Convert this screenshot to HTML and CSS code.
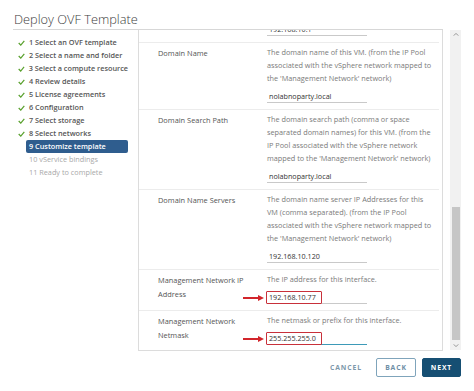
FILE: index.html
```html
<!DOCTYPE html>
<html lang="en">
<head>
    <meta charset="UTF-8">
    <meta name="viewport" content="width=device-width, initial-scale=1.0">
    <title>Deploy OVF Template</title>
    <link rel="stylesheet" href="styles.css">
</head>
<body>
    <div class="dialog">
        <h1 class="title">Deploy OVF Template</h1>

        <div class="main">
            <ul class="steps">
                <li class="step done"><svg class="check" viewBox="0 0 10 8"><polyline points="1,4 4,7 9,1"/></svg><span>1 Select an OVF template</span></li>
                <li class="step done"><svg class="check" viewBox="0 0 10 8"><polyline points="1,4 4,7 9,1"/></svg><span>2 Select a name and folder</span></li>
                <li class="step done"><svg class="check" viewBox="0 0 10 8"><polyline points="1,4 4,7 9,1"/></svg><span>3 Select a compute resource</span></li>
                <li class="step done"><svg class="check" viewBox="0 0 10 8"><polyline points="1,4 4,7 9,1"/></svg><span>4 Review details</span></li>
                <li class="step done"><svg class="check" viewBox="0 0 10 8"><polyline points="1,4 4,7 9,1"/></svg><span>5 License agreements</span></li>
                <li class="step done"><svg class="check" viewBox="0 0 10 8"><polyline points="1,4 4,7 9,1"/></svg><span>6 Configuration</span></li>
                <li class="step done"><svg class="check" viewBox="0 0 10 8"><polyline points="1,4 4,7 9,1"/></svg><span>7 Select storage</span></li>
                <li class="step done"><svg class="check" viewBox="0 0 10 8"><polyline points="1,4 4,7 9,1"/></svg><span>8 Select networks</span></li>
                <li class="step active"><span>9 Customize template</span></li>
                <li class="step todo"><span>10 vService bindings</span></li>
                <li class="step todo"><span>11 Ready to complete</span></li>
            </ul>

            <div class="fields">
                <div class="rows">
                    <!-- scrolled: only the bottom of this row shows -->
                    <div class="row">
                        <div class="label"></div>
                        <div class="field">
                            <div class="desc"></div>
                            <div class="input">192.168.10.1</div>
                        </div>
                    </div>
                    <div class="row">
                        <div class="label">Domain Name</div>
                        <div class="field">
                            <div class="desc">The domain name of this VM. (from the IP Pool<br>associated with the vSphere network mapped to<br>the 'Management Network' network)</div>
                            <div class="input">nolabnoparty.local</div>
                        </div>
                    </div>
                    <div class="row">
                        <div class="label">Domain Search Path</div>
                        <div class="field">
                            <div class="desc">The domain search path (comma or space<br>separated domain names) for this VM. (from the<br>IP Pool associated with the vSphere network<br>mapped to the 'Management Network' network)</div>
                            <div class="input">nolabnoparty.local</div>
                        </div>
                    </div>
                    <div class="row">
                        <div class="label">Domain Name Servers</div>
                        <div class="field">
                            <div class="desc">The domain name server IP Addresses for this<br>VM (comma separated). (from the IP Pool<br>associated with the vSphere network mapped to<br>the 'Management Network' network)</div>
                            <div class="input">192.168.10.120</div>
                        </div>
                    </div>
                    <div class="row">
                        <div class="label">Management Network IP<br>Address</div>
                        <div class="field">
                            <div class="desc">The IP address for this interface.</div>
                            <div class="input marked"><span class="arrow"></span><span class="box">192.168.10.77</span></div>
                        </div>
                    </div>
                    <div class="row last">
                        <div class="label">Management Network<br>Netmask</div>
                        <div class="field">
                            <div class="desc">The netmask or prefix for this interface.</div>
                            <div class="input marked focus"><span class="arrow"></span><span class="box">255.255.255.0</span></div>
                        </div>
                    </div>
                </div>
            </div>

            <div class="scrollbar">
                <svg class="chevron" viewBox="0 0 8 5"><polyline points="1,4 4,1 7,4"/></svg>
                <div class="track"><div class="thumb"></div></div>
                <svg class="chevron" viewBox="0 0 8 5"><polyline points="1,1 4,4 7,1"/></svg>
            </div>
        </div>

        <div class="footer">
            <button class="btn link">CANCEL</button>
            <button class="btn outline">BACK</button>
            <button class="btn primary">NEXT</button>
        </div>
    </div>
</body>
</html>
```

FILE: styles.css
```css
body {
    margin: 0;
    font-family: "Open Sans", "Liberation Sans", sans-serif;
    background-color: #ffffff;
    color: #565656;
}
.dialog {
    width: 474px;
    height: 391px;
    padding: 0 13px;
    box-sizing: border-box;
}
.title {
    margin: 0 18px 0 0;
    padding: 10px 0 0 1px;
    font-size: 12.8px;
    line-height: 19px;
    font-weight: 300;
    color: #3d3d3d;
    border-bottom: 1px solid #d7d7d7;
}
.main {
    display: flex;
    height: 321px;
}
.steps {
    list-style: none;
    margin: 0;
    padding: 6px 10px 0 4px;
    width: 125px;
    box-sizing: border-box;
}
.step {
    display: flex;
    align-items: center;
    height: 13px;
    font-size: 7.3px;
    font-weight: 600;
    white-space: nowrap;
}
.step span {
    flex: 1;
    padding-left: 3px;
    line-height: 13px;
    border-radius: 2px;
}
.check {
    width: 7px;
    height: 6px;
    margin: 0 1px 0 1px;
    fill: none;
    stroke: #5aa12e;
    stroke-width: 1.8;
}
.step.active,
.step.todo {
    padding-left: 9px;
}
.step.active span {
    background-color: #2f5d8e;
    color: #ffffff;
}
.step.todo span {
    color: #a8a8a8;
    font-weight: 500;
}
.fields {
    width: 305px;
    height: 321px;
    overflow: hidden;
    border-left: 1px solid #dcdcdc;
    border-right: 1px solid #dcdcdc;
    border-bottom: 1px solid #dcdcdc;
    box-sizing: border-box;
}
.rows {
    margin-top: -28px;
}
.row {
    display: flex;
    padding: 3px 0 6px 19px;
    border-bottom: 1px solid #ececec;
    margin-right: 3px;
}
.row.last {
    border-bottom: none;
}
.label {
    width: 109px;
    flex-shrink: 0;
    font-size: 7.4px;
    line-height: 14px;
    font-weight: 500;
    color: #555555;
}
.desc {
    min-height: 13px;
    font-size: 7.3px;
    line-height: 13px;
    color: #7a7a7a;
    white-space: nowrap;
}
.input {
    position: relative;
    width: 100px;
    height: 14px;
    margin-top: 4px;
    padding-left: 2px;
    box-sizing: border-box;
    border-bottom: 1px solid #c9c9c9;
    font-size: 7.2px;
    line-height: 14px;
    color: #333333;
}
.input.focus {
    border-bottom-color: #3d9ab8;
}
.input.marked {
    padding-left: 0;
}
.box {
    display: inline-block;
    margin-left: -1px;
    padding: 0 5px 0 2px;
    height: 11px;
    line-height: 11px;
    border: 1.5px solid #c8303a;
    border-radius: 1px;
    vertical-align: top;
    margin-top: 1px;
}
.arrow {
    position: absolute;
    left: -24px;
    top: 7px;
    width: 16px;
    height: 1.5px;
    background-color: #d2252b;
}
.arrow::after {
    content: "";
    position: absolute;
    right: -5px;
    top: -2.5px;
    border-left: 6px solid #d2252b;
    border-top: 3.2px solid transparent;
    border-bottom: 3.2px solid transparent;
}
.scrollbar {
    display: flex;
    flex-direction: column;
    align-items: center;
    width: 11px;
    height: 320px;
    margin-left: 7px;
    background-color: #f1f1f1;
}
.chevron {
    width: 6px;
    height: 5px;
    margin: 2px 0;
    fill: none;
    stroke: #8a8a8a;
    stroke-width: 1.2;
}
.track {
    flex: 1;
    width: 8px;
    position: relative;
}
.thumb {
    position: absolute;
    left: 0;
    right: 0;
    top: 168px;
    bottom: 1px;
    background-color: #c6c6c6;
}
.footer {
    display: flex;
    justify-content: flex-end;
    align-items: center;
    gap: 6px;
    margin-top: 7px;
}
.btn {
    height: 19px;
    padding: 0;
    font-family: "Open Sans", "Liberation Sans", sans-serif;
    font-size: 6.8px;
    font-weight: 700;
    letter-spacing: 0.9px;
    border-radius: 2px;
    background: none;
    border: 1px solid transparent;
}
.btn.link {
    width: 44px;
    margin-right: 2px;
    color: #7d98ab;
}
.btn.outline {
    width: 40px;
    border-color: #7fa4bb;
    color: #6d8ea5;
}
.btn.primary {
    width: 39px;
    background-color: #164f73;
    border-color: #164f73;
    color: #ffffff;
}
```
